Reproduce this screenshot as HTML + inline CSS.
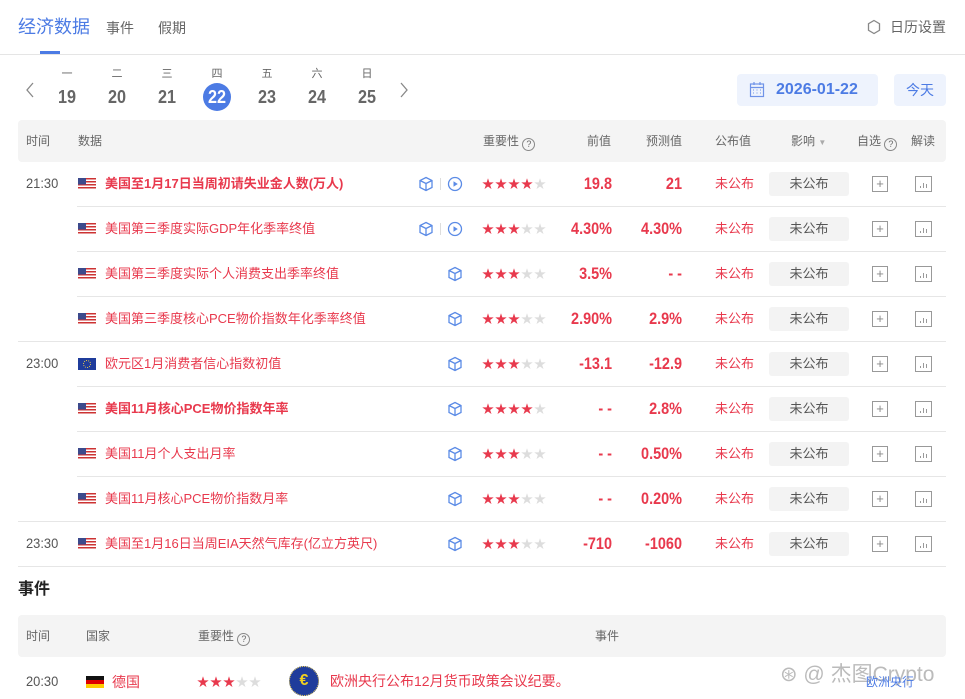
<!DOCTYPE html>
<html><head><meta charset="utf-8"><style>
*{margin:0;padding:0;box-sizing:border-box}
body{width:965px;height:699px;overflow:hidden;background:#fff;font-family:"Liberation Sans","Noto Sans CJK SC",sans-serif;color:#333;position:relative;line-height:1}
.a{position:absolute;white-space:nowrap}
.red{color:#e8394d}
.g{color:#666}
.num{font-family:"Liberation Sans",sans-serif;font-weight:bold;font-size:17px;color:#e8394d;text-align:right;width:70px;transform:scaleX(0.85);transform-origin:right center}
.stars{font-size:12px;color:#e8394d;letter-spacing:1px}
.stars i{font-style:normal;color:#ddd}
.box{position:absolute;width:80px;height:24px;background:#f3f3f3;border-radius:3px;font-size:13px;color:#555;text-align:center;line-height:24px}
.plus{position:absolute;width:16px;height:16px;border:1px solid #999;color:#888;font-size:13px;line-height:13px;text-align:center}
.day{position:absolute;width:40px;text-align:center;font-size:18px;font-weight:bold;color:#666;top:88px;transform:scaleX(0.9)}
.wd{position:absolute;width:14px;text-align:center;font-size:11px;color:#666;top:69px}
.tm{position:absolute;font-size:14px;color:#555;transform:scaleX(0.92);transform-origin:left}
</style></head><body>
<div class="a" style="left:18px;top:18px;font-size:18px;color:#4c7be4">经济数据</div>
<div class="a" style="left:40px;top:51px;width:20px;height:3px;background:#4c7be4"></div>
<div class="a g" style="left:106px;top:21px;font-size:14px">事件</div>
<div class="a g" style="left:158px;top:21px;font-size:14px">假期</div>
<svg class="a" style="left:866px;top:19px" width="16" height="16" viewBox="0 0 16 16"><path d="M8 1.5L13.5 4.7V11.3L8 14.5L2.5 11.3V4.7Z" fill="none" stroke="#888" stroke-width="1.3"/></svg>
<div class="a g" style="left:890px;top:20px;font-size:14px">日历设置</div>
<div class="a" style="left:0;top:54px;width:965px;height:1px;background:#e5e5e5"></div>

<svg class="a" style="left:24px;top:81px" width="12" height="18"><path d="M9 2L3 9L9 16" fill="none" stroke="#888" stroke-width="1.3"/></svg>
<svg class="a" style="left:398px;top:81px" width="12" height="18"><path d="M3 2L9 9L3 16" fill="none" stroke="#888" stroke-width="1.3"/></svg>
<div class="wd" style="left:60px">一</div>
<div class="wd" style="left:110px">二</div>
<div class="wd" style="left:160px">三</div>
<div class="wd" style="left:210px">四</div>
<div class="wd" style="left:260px">五</div>
<div class="wd" style="left:310px">六</div>
<div class="wd" style="left:360px">日</div>
<div class="a" style="left:203px;top:83px;width:28px;height:28px;border-radius:50%;background:#4c7be4"></div>
<div class="day" style="left:47px">19</div>
<div class="day" style="left:97px">20</div>
<div class="day" style="left:147px">21</div>
<div class="day" style="left:197px;color:#fff">22</div>
<div class="day" style="left:247px">23</div>
<div class="day" style="left:297px">24</div>
<div class="day" style="left:347px">25</div>

<div class="a" style="left:737px;top:74px;width:141px;height:32px;background:#eef3fd;border-radius:4px"></div>
<svg class="a" style="left:749px;top:81px" width="16" height="17"><rect x="1.5" y="3" width="13" height="12.5" fill="none" stroke="#6f93e8" stroke-width="1.2"/><path d="M1.5 6.5H14.5M5 1V4M11 1V4" stroke="#6f93e8" stroke-width="1.2"/><path d="M4 9h1M7.5 9h1M11 9h1M4 12h1M7.5 12h1M11 12h1" stroke="#6f93e8"/></svg>
<div class="a" style="left:776px;top:82px;font-size:16px;font-weight:bold;color:#4c7be4">2026-01-22</div>
<div class="a" style="left:894px;top:74px;width:52px;height:32px;background:#eef3fd;border-radius:4px;color:#4c7be4;font-size:14px;text-align:center;line-height:32px">今天</div>

<div class="a" style="left:18px;top:120px;width:928px;height:42px;background:#f4f4f4;border-radius:4px"></div>
<div class="a g" style="left:26px;top:135px;font-size:12px">时间</div>
<div class="a g" style="left:78px;top:135px;font-size:12px">数据</div>
<div class="a g" style="left:483px;top:135px;font-size:12px">重要性 <span style="display:inline-block;width:13px;height:13px;border:1px solid #888;border-radius:50%;font-size:9px;text-align:center;line-height:11px;vertical-align:-2px">?</span></div>
<div class="a g" style="left:587px;top:135px;font-size:12px">前值</div>
<div class="a g" style="left:646px;top:135px;font-size:12px">预测值</div>
<div class="a g" style="left:715px;top:135px;font-size:12px">公布值</div>
<div class="a g" style="left:791px;top:135px;font-size:12px">影响 <span style="font-size:8px;color:#aaa">▼</span></div>
<div class="a g" style="left:857px;top:135px;font-size:12px">自选 <span style="display:inline-block;width:13px;height:13px;border:1px solid #888;border-radius:50%;font-size:9px;text-align:center;line-height:11px;vertical-align:-2px">?</span></div>
<div class="a g" style="left:911px;top:135px;font-size:12px">解读</div>

<div id="rows"></div>
<script>
var rows=[
["21:30","美国至1月17日当周初请失业金人数(万人)",1,1,4,"19.8","21"],
["","美国第三季度实际GDP年化季率终值",0,1,3,"4.30%","4.30%"],
["","美国第三季度实际个人消费支出季率终值",0,0,3,"3.5%","- -"],
["","美国第三季度核心PCE物价指数年化季率终值",0,0,3,"2.90%","2.9%"],
["23:00","欧元区1月消费者信心指数初值",0,0,3,"-13.1","-12.9",1],
["","美国11月核心PCE物价指数年率",1,0,4,"- -","2.8%"],
["","美国11月个人支出月率",0,0,3,"- -","0.50%"],
["","美国11月核心PCE物价指数月率",0,0,3,"- -","0.20%"],
["23:30","美国至1月16日当周EIA天然气库存(亿立方英尺)",0,0,3,"-710","-1060"]];
var h="";
var us='<svg width="18" height="12"><rect width="18" height="12" fill="#fff"/><g fill="#c33"><rect y="0" width="18" height="1.5"/><rect y="3" width="18" height="1.5"/><rect y="6" width="18" height="1.5"/><rect y="9" width="18" height="1.5"/></g><rect width="8" height="6.5" fill="#3c4a8c"/></svg>';
var eu='<svg width="18" height="12"><rect width="18" height="12" fill="#1f3c9b"/><circle cx="9" cy="6" r="3.5" fill="none" stroke="#e6c84a" stroke-dasharray="1 1.2"/></svg>';
var cube='<svg width="16" height="16" viewBox="0 0 16 16"><path d="M8 1.5L14 4.5V11.5L8 14.5L2 11.5V4.5Z M2 4.5L8 7.5L14 4.5 M8 7.5V14.5" fill="none" stroke="#5b8be6" stroke-width="1.3"/></svg>';
var play='<svg width="16" height="16" viewBox="0 0 16 16"><circle cx="8" cy="8" r="6.5" fill="none" stroke="#5b8be6" stroke-width="1.3"/><path d="M6.5 5.3L10.8 8L6.5 10.7Z" fill="#5b8be6"/></svg>';
var chart='<svg width="18" height="16"><rect x="0.5" y="0.5" width="16" height="15" fill="none" stroke="#999"/><path d="M5.5 10V12M8.5 7V12M11.5 8V12" stroke="#999"/></svg>';
rows.forEach(function(r,i){
 var c=184+45*i;
 if(r[0])h+='<div class="tm" style="left:26px;top:'+(c-8)+'px">'+r[0]+'</div>';
 h+='<div class="a" style="left:78px;top:'+(c-6)+'px">'+(r[7]?eu:us)+'</div>';
 h+='<div class="a red" style="left:105px;top:'+(c-7)+'px;font-size:13px;'+(r[2]?'font-weight:bold':'')+'">'+r[1]+'</div>';
 if(r[3]){h+='<div class="a" style="left:418px;top:'+(c-8)+'px">'+cube+'</div><div class="a" style="left:440px;top:'+(c-6)+'px;width:1px;height:12px;background:#ddd"></div><div class="a" style="left:447px;top:'+(c-8)+'px">'+play+'</div>';}
 else h+='<div class="a" style="left:447px;top:'+(c-8)+'px">'+cube+'</div>';
 var s="";for(var k=0;k<5;k++)s+=k<r[4]?'★':'<i>★</i>';
 h+='<div class="a stars" style="left:482px;top:'+(c-6)+'px">'+s+'</div>';
 h+='<div class="a num" style="left:542px;top:'+(c-9)+'px">'+r[5]+'</div>';
 h+='<div class="a num" style="left:612px;top:'+(c-9)+'px">'+r[6]+'</div>';
 h+='<div class="a red" style="left:715px;top:'+(c-7)+'px;font-size:13px">未公布</div>';
 h+='<div class="box" style="left:769px;top:'+(c-12)+'px">未公布</div>';
 h+='<div class="plus" style="left:872px;top:'+(c-8)+'px">+</div>';
 h+='<div class="a" style="left:915px;top:'+(c-8)+'px">'+chart+'</div>';
 var full=(i==3||i==7||i==8);
 h+='<div class="a" style="left:'+(full?18:77)+'px;top:'+(c+22)+'px;width:'+(full?928:869)+'px;height:1px;background:#e6e6e6"></div>';
});
document.getElementById('rows').innerHTML=h;
</script>

<div class="a" style="left:18px;top:582px;font-size:16px;font-weight:bold;color:#222">事件</div>
<div class="a" style="left:18px;top:615px;width:928px;height:42px;background:#f4f4f4;border-radius:4px"></div>
<div class="a g" style="left:26px;top:630px;font-size:12px">时间</div>
<div class="a g" style="left:86px;top:630px;font-size:12px">国家</div>
<div class="a g" style="left:198px;top:630px;font-size:12px">重要性 <span style="display:inline-block;width:13px;height:13px;border:1px solid #888;border-radius:50%;font-size:9px;text-align:center;line-height:11px;vertical-align:-2px">?</span></div>
<div class="a g" style="left:595px;top:630px;font-size:12px">事件</div>
<div class="tm" style="left:26px;top:674px">20:30</div>
<div class="a" style="left:86px;top:676px;width:18px;height:12px;background:linear-gradient(#111 33%,#d00 33%,#d00 66%,#fc0 66%)"></div>
<div class="a red" style="left:112px;top:675px;font-size:14px">德国</div>
<div class="a stars" style="left:197px;top:676px">★★★<i>★★</i></div>
<div class="a" style="left:289px;top:666px;width:30px;height:30px;border-radius:50%;background:#1f3c9b;border:1px dotted #e6c84a;color:#f0d020;font-size:16px;text-align:center;line-height:28px;font-weight:bold">€</div>
<div class="a red" style="left:330px;top:674px;font-size:14px">欧洲央行公布12月货币政策会议纪要。</div>
<div class="a" style="left:780px;top:664px;font-size:21px;color:#bbb">⊛ @ 杰图Crypto</div>
<div class="a" style="left:866px;top:676px;font-size:12px;color:#4c7be4">欧洲央行</div>
</body></html>
